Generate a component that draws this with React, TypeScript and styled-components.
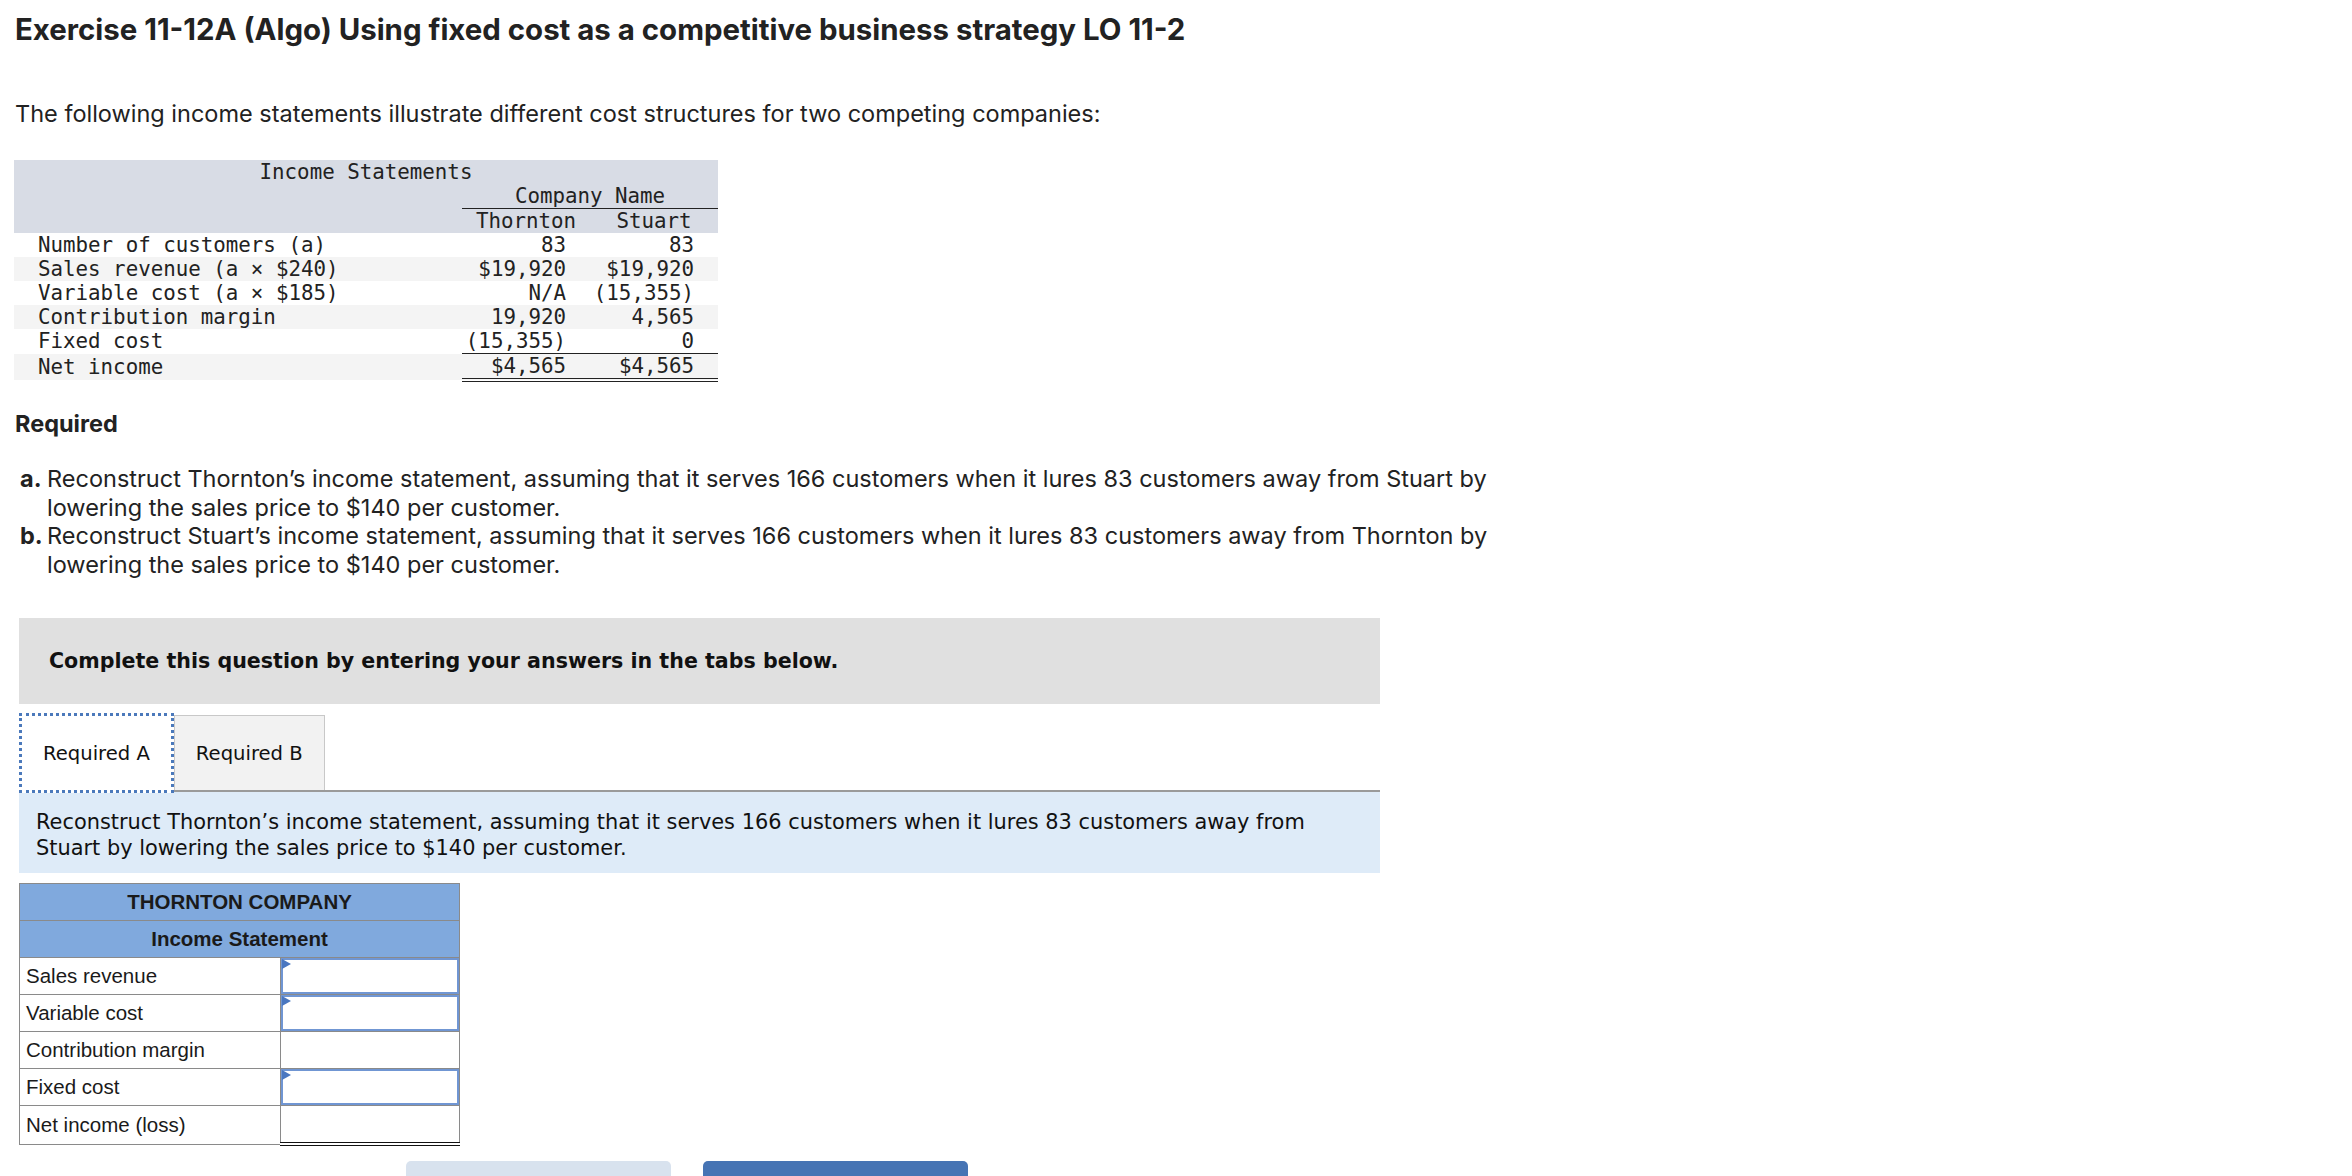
import React from "react";
import styled, { createGlobalStyle } from "styled-components";

const GlobalStyle = createGlobalStyle`
  html, body {
    margin: 0;
    padding: 0;
    background: #ffffff;
  }
  body {
    font-family: "Inter", "Lato", "Liberation Sans", sans-serif;
    color: #222222;
  }
`;

const Page = styled.div`
  padding: 13px 0 0 15px;
  width: 2337px;
  box-sizing: border-box;
`;

const Title = styled.h1`
  margin: 0;
  font-size: 29.4px;
  font-weight: 700;
  line-height: 34px;
  color: #222;
`;

const Intro = styled.p`
  margin: 53px 0 0 0;
  font-size: 23.5px;
  line-height: 28px;
  color: #222;
`;

/* ---------- given income statements ---------- */

const GivenTable = styled.table`
  margin: 32px 0 0 -1px;
  border-collapse: collapse;
  font-family: "DejaVu Sans Mono", "Liberation Mono", monospace;
  font-size: 20.8px;
  color: #222;
  width: 704px;
`;

const HeadRow = styled.tr`
  background: #d8dce5;
`;

const HeadCell = styled.td<{ $underline?: boolean }>`
  height: 24px;
  padding: 0;
  line-height: 24px;
  text-align: center;
  white-space: pre;
  border-bottom: ${(p) => (p.$underline ? "1.5px solid #222" : "none")};
`;

const BodyRow = styled.tr<{ $shade?: boolean }>`
  background: ${(p) => (p.$shade ? "#f4f4f4" : "#ffffff")};
`;

const LabelCell = styled.td`
  width: 425px;
  height: 24px;
  padding: 0 0 0 24px;
  line-height: 24px;
  white-space: pre;
`;

const ValueCell = styled.td<{ $rule?: "single" | "double" }>`
  width: 104px;
  height: 24px;
  padding: 0 24px 0 0;
  line-height: 24px;
  text-align: right;
  white-space: pre;
  border-bottom: ${(p) =>
    p.$rule === "single" ? "1.5px solid #222" : p.$rule === "double" ? "4px double #222" : "none"};
`;

/* ---------- required ---------- */

const RequiredHeading = styled.h3`
  margin: 28px 0 0 0;
  font-size: 23.5px;
  font-weight: 700;
  line-height: 28px;
`;

const ReqList = styled.ol`
  list-style: none;
  margin: 27px 0 0 0;
  padding: 0 0 0 5px;
`;

const ReqItem = styled.li`
  display: grid;
  grid-template-columns: 27px 1fr;
  font-size: 23.5px;
  line-height: 28.5px;
`;

const ReqMark = styled.span`
  font-weight: 700;
`;

/* ---------- answer area ---------- */

const Workspace = styled.div`
  margin: 39px 0 0 4px;
  width: 1361px;
  font-family: "DejaVu Sans", Verdana, sans-serif;
`;

const Banner = styled.div`
  background: #e0e0e0;
  height: 86px;
  display: flex;
  align-items: center;
  padding-left: 30px;
  font-size: 20.6px;
  font-weight: 700;
  color: #111;
`;

const TabBar = styled.div`
  margin-top: 9px;
  display: flex;
  align-items: flex-end;
  border-bottom: 2px solid #9a9a9a;
  height: 77px;
`;

const Tab = styled.div<{ $active?: boolean }>`
  box-sizing: border-box;
  display: flex;
  align-items: center;
  font-size: 19.6px;
  color: #111;
  background: ${(p) => (p.$active ? "#ffffff" : "#f2f2f2")};
  border: ${(p) => (p.$active ? "3px dotted #4b79bb" : "1px solid #c8c8c8")};
  border-bottom: ${(p) => (p.$active ? "3px dotted #4b79bb" : "none")};
  height: ${(p) => (p.$active ? "80px" : "75px")};
  padding: 0 21px;
  margin-bottom: ${(p) => (p.$active ? "-3px" : "0")};
  position: relative;
  z-index: ${(p) => (p.$active ? 1 : 0)};
`;

const Prompt = styled.div`
  background: #deebf8;
  padding: 17px 16px 12px 17px;
  font-size: 20.9px;
  line-height: 26px;
  color: #111;
`;

const Statement = styled.table`
  margin-top: 10px;
  border-collapse: collapse;
  width: 441px;
  font-family: "Liberation Sans", Arial, sans-serif;
  font-size: 20.5px;
  color: #1a1a1a;
`;

const StatementHead = styled.th`
  background: #80a9dd;
  height: 36px;
  padding: 0;
  border: 1px solid #8a8a8a;
  font-weight: 700;
  text-align: center;
`;

const RowLabel = styled.td`
  width: 254px;
  height: 36px;
  padding: 0 0 0 6px;
  border: 1px solid #8a8a8a;
  white-space: nowrap;
`;

const AmountCell = styled.td<{ $top?: boolean; $double?: boolean }>`
  position: relative;
  padding: 0;
  height: 36px;
  border: 1px solid #8a8a8a;
  border-top: ${(p) => (p.$top ? "1.5px solid #111" : "1px solid #8a8a8a")};
  border-bottom: ${(p) => (p.$double ? "4px double #111" : "1px solid #8a8a8a")};
`;

const AmountInput = styled.input`
  box-sizing: border-box;
  display: block;
  width: 100%;
  height: 36px;
  margin: 0;
  border: 2px solid #7096d3;
  background: #ffffff;
  font: inherit;
  text-align: right;
  padding: 0 6px;
  outline: none;
`;

const Marker = styled.span`
  position: absolute;
  left: 1px;
  top: 1px;
  width: 0;
  height: 0;
  border-top: 5px solid transparent;
  border-bottom: 5px solid transparent;
  border-left: 9px solid #4a77c0;
`;

const NavRow = styled.div`
  display: flex;
  gap: 32px;
  margin: 15px 0 0 387px;
`;

const NavButton = styled.button<{ $primary?: boolean }>`
  width: 265px;
  height: 50px;
  border: none;
  border-radius: 5px;
  background: ${(p) => (p.$primary ? "#4674b4" : "#d8e2ee")};
  color: #ffffff;
  font-family: "DejaVu Sans", Verdana, sans-serif;
  font-size: 19px;
  padding: 0;
`;

const given = [
  { label: "Number of customers (a)", t: "83", s: "83" },
  { label: "Sales revenue (a × $240)", t: "$19,920", s: "$19,920" },
  { label: "Variable cost (a × $185)", t: "N/A", s: "(15,355)" },
  { label: "Contribution margin", t: "19,920", s: "4,565" },
  { label: "Fixed cost", t: "(15,355)", s: "0", rule: "single" as const },
  { label: "Net income", t: "$4,565", s: "$4,565", rule: "double" as const },
];

const lines = [
  { label: "Sales revenue", input: true },
  { label: "Variable cost", input: true },
  { label: "Contribution margin", input: false, top: true },
  { label: "Fixed cost", input: true },
  { label: "Net income (loss)", input: false, top: true, double: true },
];

export default function App() {
  return (
    <>
      <GlobalStyle />
      <Page>
        <Title>Exercise 11-12A (Algo) Using fixed cost as a competitive business strategy LO 11-2</Title>
        <Intro>The following income statements illustrate different cost structures for two competing companies:</Intro>

        <GivenTable>
          <tbody>
            <HeadRow>
              <HeadCell colSpan={3}>Income Statements</HeadCell>
            </HeadRow>
            <HeadRow>
              <HeadCell />
              <HeadCell colSpan={2} $underline>Company Name</HeadCell>
            </HeadRow>
            <HeadRow>
              <HeadCell />
              <HeadCell>Thornton</HeadCell>
              <HeadCell>Stuart</HeadCell>
            </HeadRow>
            {given.map((row, i) => (
              <BodyRow key={row.label} $shade={i % 2 === 1}>
                <LabelCell>{row.label}</LabelCell>
                <ValueCell $rule={row.rule}>{row.t}</ValueCell>
                <ValueCell $rule={row.rule}>{row.s}</ValueCell>
              </BodyRow>
            ))}
          </tbody>
        </GivenTable>

        <RequiredHeading>Required</RequiredHeading>
        <ReqList>
          <ReqItem>
            <ReqMark>a.</ReqMark>
            <span>
              Reconstruct Thornton’s income statement, assuming that it serves 166 customers when it lures 83 customers away from Stuart by
              <br />
              lowering the sales price to $140 per customer.
            </span>
          </ReqItem>
          <ReqItem>
            <ReqMark>b.</ReqMark>
            <span>
              Reconstruct Stuart’s income statement, assuming that it serves 166 customers when it lures 83 customers away from Thornton by
              <br />
              lowering the sales price to $140 per customer.
            </span>
          </ReqItem>
        </ReqList>

        <Workspace>
          <Banner>Complete this question by entering your answers in the tabs below.</Banner>
          <TabBar>
            <Tab $active>Required A</Tab>
            <Tab>Required B</Tab>
          </TabBar>
          <Prompt>
            Reconstruct Thornton’s income statement, assuming that it serves 166 customers when it lures 83 customers away from
            <br />
            Stuart by lowering the sales price to $140 per customer.
          </Prompt>

          <Statement>
            <thead>
              <tr>
                <StatementHead colSpan={2}>THORNTON COMPANY</StatementHead>
              </tr>
              <tr>
                <StatementHead colSpan={2}>Income Statement</StatementHead>
              </tr>
            </thead>
            <tbody>
              {lines.map((line) => (
                <tr key={line.label}>
                  <RowLabel>{line.label}</RowLabel>
                  <AmountCell $top={line.top} $double={line.double}>
                    {line.input && (
                      <>
                        <AmountInput type="text" aria-label={line.label} />
                        <Marker />
                      </>
                    )}
                  </AmountCell>
                </tr>
              ))}
            </tbody>
          </Statement>

          <NavRow>
            <NavButton disabled>&lt; Required A</NavButton>
            <NavButton $primary>Required B &gt;</NavButton>
          </NavRow>
        </Workspace>
      </Page>
    </>
  );
}
